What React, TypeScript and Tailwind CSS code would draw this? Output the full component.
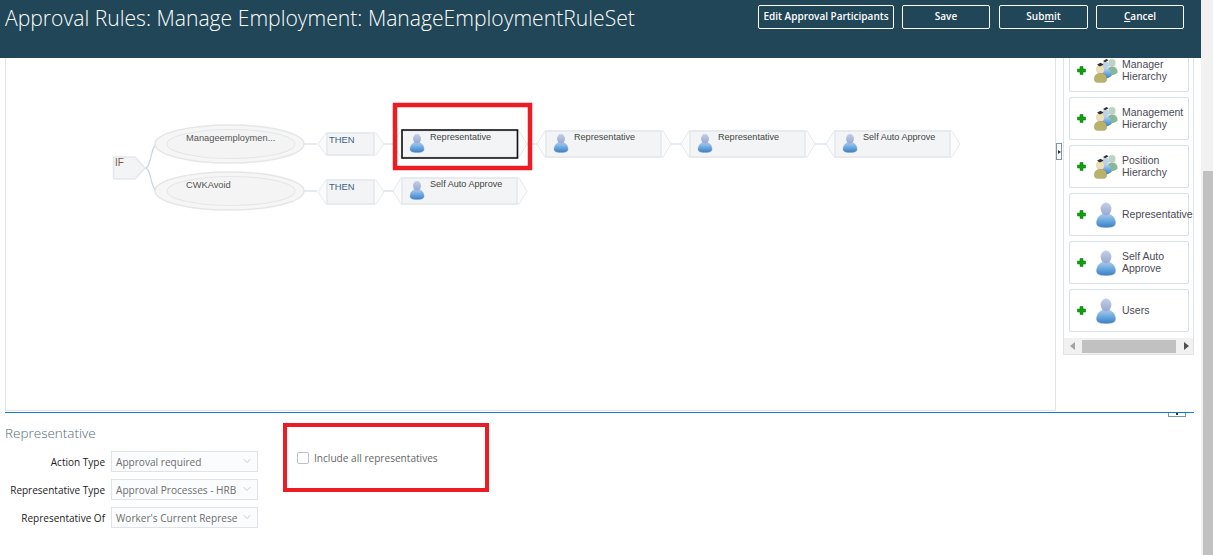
import { ChevronDown } from "lucide-react";

const uiFont = "font-['Open_Sans',sans-serif]";
const arial = "font-['Liberation_Sans',Arial,sans-serif]";

function Person({ x, y, s = 1 }: { x: number; y: number; s?: number }) {
  return (
    <g transform={`translate(${x} ${y}) scale(${s})`}>
      <path d="M0 20.5 C0 15.5 3.5 12.5 6.5 11.5 L12.5 11.5 C15.5 12.5 19 15.5 19 20.5 C19 24.5 14 25 9.5 25 C5 25 0 24.5 0 20.5 Z" fill="url(#bodyBlue)" stroke="#7fa3c7" strokeWidth="0.4" />
      <ellipse cx="9.5" cy="6.5" rx="5.4" ry="6.5" fill="url(#headBlue)" />
    </g>
  );
}

function PersonIcon() {
  return (
    <svg width="20" height="26" viewBox="0 0 20 26" className="shrink-0">
      <Person x={0.5} y={0.5} />
    </svg>
  );
}

function GroupIcon() {
  return (
    <svg width="24" height="25" viewBox="0 0 24 25" className="shrink-0">
      {/* green, back */}
      <path d="M13 17 C12.5 11 15 8.5 18 8.5 C21.5 8.5 24 11 23.5 15 Q19 18.5 13 17 Z" fill="#86b898" />
      <ellipse cx="18" cy="5" rx="3.6" ry="4" fill="#bcd4c2" />
      {/* blue, middle */}
      <path d="M7 20 C6.5 13.5 9 11 12 11 C15.5 11 18 13.5 17.5 18 Q12.5 22 7 20 Z" fill="url(#bodyBlue)" />
      <ellipse cx="11.5" cy="7.5" rx="3.5" ry="3.8" fill="#bdd2ea" />
      <path d="M9 3 L12.5 1 L14.5 2.2 L11 4.2 Z" fill="#2e2e2e" />
      {/* olive, front */}
      <ellipse cx="6.5" cy="11.5" rx="4" ry="4.5" fill="#e8e3bb" stroke="#a3a078" strokeWidth="0.3" />
      <path d="M3 6.8 L6.5 4.8 L9.5 6.4 L6 8.4 Z" fill="#2e2e2e" />
      <path d="M0.3 21.5 C0 17.5 2.5 15.3 6.5 15.3 C10.5 15.3 13 17.5 12.8 21.5 C12.7 24.5 9.5 24.6 6.5 24.6 C3.5 24.6 0.4 24.5 0.3 21.5 Z" fill="#b8b26c" stroke="#8e8a52" strokeWidth="0.3" />
    </svg>
  );
}

function PlusIcon() {
  return (
    <svg width="9" height="9" viewBox="0 0 9 9" className="shrink-0">
      <path d="M3 0.5 H6 V3 H8.5 V6 H6 V8.5 H3 V6 H0.5 V3 H3 Z" fill="#0ba30b" stroke="#0a6e0a" strokeWidth="0.5" />
    </svg>
  );
}

const paletteItems = [
  { icon: "group", lines: ["Manager", "Hierarchy"] },
  { icon: "group", lines: ["Management", "Hierarchy"] },
  { icon: "group", lines: ["Position", "Hierarchy"] },
  { icon: "person", lines: ["Representative"] },
  { icon: "person", lines: ["Self Auto", "Approve"] },
  { icon: "person", lines: ["Users"] },
];

function Chevron({ x, y, w, h, tip }: { x: number; y: number; w: number; h: number; tip: number }) {
  const mid = y + h / 2;
  return (
    <g>
      <path
        d={`M${x - tip} ${mid} L${x} ${y} H${x + w} L${x + w + tip} ${mid} L${x + w} ${y + h} H${x} Z`}
        fill="#fafbfb"
        stroke="#e6eaef"
        strokeWidth="1"
      />
      <rect x={x + 1} y={y} width={w - 3} height={h} fill="#f3f4f5" stroke="#e3e8ee" strokeWidth="1.5" />
    </g>
  );
}

const approvers = [
  { x: 401, y: 131, label: "Representative" },
  { x: 545, y: 131, label: "Representative" },
  { x: 689, y: 131, label: "Representative" },
  { x: 834, y: 131, label: "Self Auto Approve" },
  { x: 401, y: 178, label: "Self Auto Approve" },
];

function RuleDiagram() {
  return (
    <svg viewBox="6 58 1049 352" className={`block w-[1049px] h-[352px] ${arial}`}>
      {/* connectors */}
      <g fill="none" stroke="#c7d6e4" strokeWidth="1.2">
        <path d="M145 168 C152 168 150 144 158 144" />
        <path d="M145 168 C152 168 150 191 158 191" />
        <path d="M304 144 H317 M383 144 H396 M526 144 H537 M670 144 H682 M815 144 H826 M304 191 H317 M383 191 H394" />
      </g>

      {/* IF */}
      <path d="M115 157 H135 L145 168 L135 179 H115 Q113.5 179 113.5 177.5 V158.5 Q113.5 157 115 157 Z" fill="#f3f4f5" stroke="#e3e8ee" strokeWidth="1.5" />
      <text x="115" y="166" fontSize="10" fill="#7a5a48">IF</text>

      {/* conditions */}
      <ellipse cx="229.5" cy="144" rx="74.5" ry="19" fill="#f6f6f6" stroke="#e4e6e8" strokeWidth="1.5" />
      <ellipse cx="231" cy="144" rx="64" ry="14.5" fill="#f4f4f4" stroke="#e4e6e8" strokeWidth="1.2" />
      <text x="186" y="141" fontSize="9.3" fill="#555">Manageemploymen...</text>
      <ellipse cx="229.5" cy="191" rx="74.5" ry="19" fill="#f6f6f6" stroke="#e4e6e8" strokeWidth="1.5" />
      <ellipse cx="231" cy="191" rx="64" ry="14.5" fill="#f4f4f4" stroke="#e4e6e8" strokeWidth="1.2" />
      <text x="186" y="188" fontSize="9.3" fill="#555">CWKAvoid</text>

      {/* THEN */}
      <Chevron x={326} y={133} w={50} h={22} tip={8} />
      <text x="329" y="143" fontSize="9.4" fill="#3f5f85">THEN</text>
      <Chevron x={326} y={180} w={50} h={24} tip={8} />
      <text x="329" y="190" fontSize="9.4" fill="#3f5f85">THEN</text>

      {/* approvers */}
      {approvers.map((a) => (
        <g key={`${a.x}-${a.y}`}>
          <Chevron x={a.x} y={a.y} w={118} h={26} tip={8} />
          <Person x={a.x + 9} y={a.y + 3} s={0.74} />
          <text x={a.x + 29} y={a.y + 9} fontSize="9.1" fill="#444">{a.label}</text>
        </g>
      ))}

      {/* selected node */}
      <rect x="402" y="130" width="115.5" height="28" fill="none" stroke="#111" strokeWidth="1.6" />
      {/* callout */}
      <rect x="395" y="105" width="135" height="63" fill="none" stroke="#ed1c24" strokeWidth="4.5" />
    </svg>
  );
}

function Palette() {
  return (
    <div className="w-[131px] h-[297px] border-x border-b border-[#dfe4ea] flex flex-col overflow-hidden">
      <div className="h-[283px] shrink-0 pl-[5px] -mt-[9px] flex flex-col gap-[5px]">
        {paletteItems.map((item) => (
          <div
            key={item.lines[0]}
            className={`w-[120px] h-[43px] shrink-0 border border-[#d9e0e6] rounded-[2px] bg-white flex items-center pl-[7px] ${arial} text-[10.5px] leading-[12px] text-[#4a4a55]`}
          >
            <PlusIcon />
            <div className="w-[24px] shrink-0 flex justify-center ml-[8px]">
              {item.icon === "group" ? <GroupIcon /> : <PersonIcon />}
            </div>
            <div className="ml-[4px] whitespace-nowrap -mt-[1px]">
              {item.lines.map((l) => (
                <div key={l}>{l}</div>
              ))}
            </div>
          </div>
        ))}
      </div>
      <div className="h-[16px] shrink-0 mt-[6px] bg-[#f1f1f1] flex items-center">
        <span className="w-0 h-0 ml-[6px] border-y-[4px] border-y-transparent border-r-[5px] border-r-[#a3a3a3]" />
        <span className="w-[94px] h-[13px] ml-[7px] bg-[#c1c1c1]" />
        <span className="w-0 h-0 ml-[8px] border-y-[4px] border-y-transparent border-l-[5px] border-l-[#505050]" />
      </div>
    </div>
  );
}

const fields = [
  { label: "Action Type", value: "Approval required" },
  { label: "Representative Type", value: "Approval Processes - HRB" },
  { label: "Representative Of", value: "Worker's Current Represe" },
];

function SelectField({ label, value }: { label: string; value: string }) {
  return (
    <div className="flex items-center h-[22px]">
      <div className="w-[100px] pt-[2px] text-right text-[10px] text-[#222] whitespace-nowrap">{label}</div>
      <div className="ml-[6px] w-[147px] h-[21px] border border-[#dfe4e8] bg-[#fbfcfd] flex items-center">
        <div className="w-[126px] pl-[4px] pt-[3px] text-[10.1px] text-[#6e6e6e] whitespace-nowrap">{value}</div>
        <ChevronDown className="w-[12px] h-[12px] ml-[3px] text-[#b3b8bc]" strokeWidth={1.5} />
      </div>
    </div>
  );
}

export default function App() {
  return (
    <div className={`flex w-[1213px] h-[555px] overflow-hidden bg-white ${uiFont}`}>
      <div className="w-[1201px] flex flex-col">
        {/* Title bar */}
        <div className="relative z-10 h-[58px] shrink-0 bg-[#204657] flex items-start justify-between pl-[5px] pr-[17px]">
          <h1 className="text-[21.15px] font-light leading-[36px] text-white whitespace-nowrap">
            Approval Rules: Manage Employment: ManageEmploymentRuleSet
          </h1>
          <div className="flex mt-[5px] text-[10px] font-semibold text-white">
            <button className="w-[136px] h-[24px] pb-[1px] mr-[8px] border border-white rounded-[2px]">Edit Approval Participants</button>
            <button className="w-[88px] h-[24px] pb-[1px] mr-[9px] border border-white rounded-[2px]">Save</button>
            <button className="w-[89px] h-[24px] pb-[1px] mr-[8px] border border-white rounded-[2px]">Sub<u>m</u>it</button>
            <button className="w-[88px] h-[24px] pb-[1px] border border-white rounded-[2px]"><u>C</u>ancel</button>
          </div>
        </div>

        {/* Canvas and palette */}
        <div className="flex h-[353px] shrink-0 pl-[5px]">
          <div className="w-[1051px] border-x border-b border-[#dfe4ea]">
            <RuleDiagram />
          </div>
          <div className="w-[7px] flex justify-start pt-[85px]">
            <div className="w-[6px] h-[17px] border border-[#7d94a5] bg-white flex items-center justify-center">
              <span className="w-0 h-0 border-y-[2.5px] border-y-transparent border-l-[3px] border-l-[#333]" />
            </div>
          </div>
          <Palette />
        </div>

        {/* Detail splitter */}
        <div className="relative ml-[5px] w-[1189px] h-0 mt-[1px] border-t border-[#0f7ad0]">
          <div className="absolute left-[1163px] top-0 w-[18px] h-[4px] border-x border-b border-[#7d94a5] bg-white flex justify-center">
            <span className="w-[2px] h-[2px] bg-[#333]" />
          </div>
        </div>

        {/* Detail form */}
        <div className="flex pl-[5px] pt-[10px]">
          <div className="w-[278px]">
            <div className="text-[13.5px] font-light leading-[20px] text-[#4f6b7a]">Representative</div>
            <div className="mt-[7px] flex flex-col gap-[6px]">
              {fields.map((f) => (
                <SelectField key={f.label} {...f} />
              ))}
            </div>
          </div>
          <div className="w-[206px] h-[69px] border-[4.5px] border-[#ed1c24] flex items-center pl-[10px]">
            <span className="w-[12px] h-[12px] mt-[1px] border border-[#b9c1c7] rounded-[2px] bg-white" />
            <span className="ml-[5px] pt-[3px] text-[10.1px] text-[#666] whitespace-nowrap">Include all representatives</span>
          </div>
        </div>
      </div>

      {/* Page scrollbar */}
      <div className="w-[12px] bg-[#f1f1f1] pl-[2px] pt-[171px]">
        <div className="w-[10px] h-[384px] bg-[#c1c1c1]" />
      </div>

      <svg className="absolute w-0 h-0" aria-hidden="true">
        <defs>
          <linearGradient id="bodyBlue" x1="0" y1="0" x2="0" y2="1">
            <stop offset="0" stopColor="#a8cdf0" />
            <stop offset="0.6" stopColor="#5f9fdc" />
            <stop offset="1" stopColor="#3f7fc0" />
          </linearGradient>
          <linearGradient id="headBlue" x1="0" y1="0" x2="0" y2="1">
            <stop offset="0" stopColor="#c3cee8" />
            <stop offset="1" stopColor="#98a8d0" />
          </linearGradient>
        </defs>
      </svg>
    </div>
  );
}
